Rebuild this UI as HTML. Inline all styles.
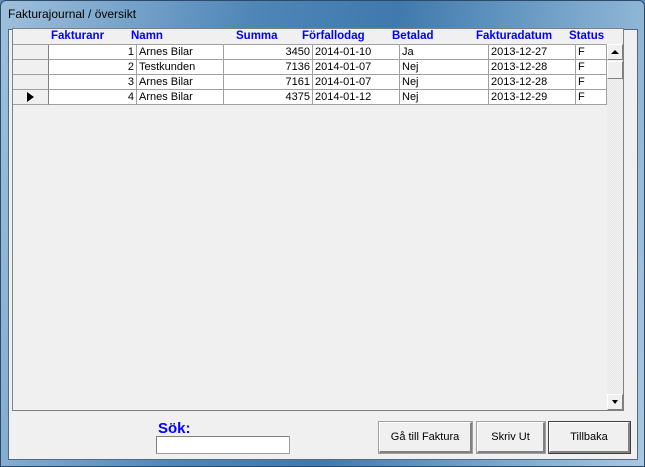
<!DOCTYPE html>
<html><head><style>
*{margin:0;padding:0;box-sizing:border-box}
body{width:645px;height:467px;overflow:hidden;background:#5f8fbb;font-family:"Liberation Sans",Arial,sans-serif;font-size:11px;position:relative}
.frame{position:absolute;left:0;top:0;width:645px;height:467px;border-radius:6px 6px 0 0;background:linear-gradient(100deg,#9fc0dc 0%,#4f86b8 35%,#3f79ad 55%,#7aa7cc 80%,#a9c8e0 100%);border:1px solid #2c4a6a}
.title{position:absolute;left:8px;top:7px;font-size:12px;color:#000}
.client{position:absolute;left:8px;top:29px;width:630px;height:431px;background:#f0f0f0;border:1px solid #506a86}
.panel{position:absolute;left:12px;top:28px;width:612px;height:383px;border:1px solid #808080;background:#f0f0f0}
.hd{position:absolute;top:30px;color:#0000ff;font-weight:bold;font-size:11.5px}
.row{position:absolute;left:13px;height:15px;width:594px}
.c{position:absolute;top:0;height:15px;background:#fff;border-right:1px solid #a0a0a0;border-bottom:1px solid #a0a0a0;line-height:14px;padding:0 2px;white-space:nowrap;font-size:11px}
.rh{background:#f0f0f0;border-right:1px solid #808080}
.r{text-align:right}
.sb{position:absolute;left:607px;top:44px;width:16px;height:366px;background:repeating-conic-gradient(#f4f4f4 0 25%,#e4e4e4 0 50%) 0 0/2px 2px}
.sbb{position:absolute;left:0;width:16px;height:16px;background:#f0f0f0;border:1px solid #fff;border-right-color:#808080;border-bottom-color:#808080}
.btn{position:absolute;top:422px;height:31px;background:#f0f0f0;border:1px solid #fff;border-right:2px solid #808080;border-bottom:2px solid #808080;outline:1px solid #a0a0a0;text-align:center;line-height:28px;font-size:11px}
</style></head><body>
<div class="frame"></div>
<div class="title">Fakturajournal / översikt</div>
<div class="client"></div>
<div class="panel"></div>
<div style="position:absolute;left:13px;top:44px;width:594px;height:1px;background:#a0a0a0"></div>
<div class="hd" style="left:51px">Fakturanr</div>
<div class="hd" style="left:131px">Namn</div>
<div class="hd" style="left:236px">Summa</div>
<div class="hd" style="left:302px">Förfallodag</div>
<div class="hd" style="left:392px">Betalad</div>
<div class="hd" style="left:476px">Fakturadatum</div>
<div class="hd" style="left:569px">Status</div>

<div class="row" style="top:45px">
<div class="c rh" style="left:0;width:36px"></div><div class="c r" style="left:36px;width:88px">1</div><div class="c" style="left:124px;width:87px">Arnes Bilar</div><div class="c r" style="left:211px;width:89px">3450</div><div class="c" style="left:300px;width:87px">2014-01-10</div><div class="c" style="left:387px;width:89px">Ja</div><div class="c" style="left:476px;width:87px">2013-12-27</div><div class="c" style="left:563px;width:31px">F</div></div>
<div class="row" style="top:60px">
<div class="c rh" style="left:0;width:36px"></div><div class="c r" style="left:36px;width:88px">2</div><div class="c" style="left:124px;width:87px">Testkunden</div><div class="c r" style="left:211px;width:89px">7136</div><div class="c" style="left:300px;width:87px">2014-01-07</div><div class="c" style="left:387px;width:89px">Nej</div><div class="c" style="left:476px;width:87px">2013-12-28</div><div class="c" style="left:563px;width:31px">F</div></div>
<div class="row" style="top:75px">
<div class="c rh" style="left:0;width:36px"></div><div class="c r" style="left:36px;width:88px">3</div><div class="c" style="left:124px;width:87px">Arnes Bilar</div><div class="c r" style="left:211px;width:89px">7161</div><div class="c" style="left:300px;width:87px">2014-01-07</div><div class="c" style="left:387px;width:89px">Nej</div><div class="c" style="left:476px;width:87px">2013-12-28</div><div class="c" style="left:563px;width:31px">F</div></div>
<div class="row" style="top:90px">
<div class="c rh" style="left:0;width:36px"><svg width="10" height="12" style="position:absolute;left:13px;top:1px"><path d="M1 1L8 6L1 11Z" fill="#000"/></svg></div><div class="c r" style="left:36px;width:88px">4</div><div class="c" style="left:124px;width:87px">Arnes Bilar</div><div class="c r" style="left:211px;width:89px">4375</div><div class="c" style="left:300px;width:87px">2014-01-12</div><div class="c" style="left:387px;width:89px">Nej</div><div class="c" style="left:476px;width:87px">2013-12-29</div><div class="c" style="left:563px;width:31px">F</div></div>

<div class="sb">
<div class="sbb" style="top:0"><svg width="14" height="14"><path d="M3 9L7 5L11 9Z" fill="#000"/></svg></div>
<div class="sbb" style="top:17px;height:18px"></div>
<div class="sbb" style="top:350px"><svg width="14" height="14"><path d="M4 5L10 5L7 9Z" fill="#000"/></svg></div>
</div>

<div style="position:absolute;left:158px;top:420px;color:#0000ff;font-size:15px;font-weight:bold">Sök:</div>
<div style="position:absolute;left:156px;top:436px;width:134px;height:18px;background:#fff;border:1px solid #a0a0a0;border-top-color:#808080;border-left-color:#808080"></div>

<div class="btn" style="left:379px;width:93px">Gå till Faktura</div>
<div class="btn" style="left:477px;width:68px">Skriv Ut</div>
<div class="btn" style="left:549px;width:81px;outline:1px solid #404040">Tillbaka</div>
</body></html>
